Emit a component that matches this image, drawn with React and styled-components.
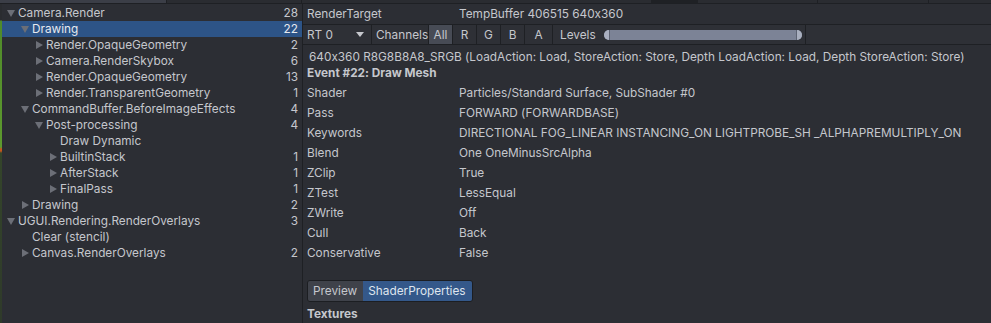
import React from 'react'
import styled, { createGlobalStyle } from 'styled-components'

const Global = createGlobalStyle`
  html, body { margin: 0; padding: 0; background: #2c2e34; }
  body {
    font-family: Inter, "Noto Sans", sans-serif;
    font-size: 11.8px;
    font-feature-settings: "calt" 0;
    color: #c5c7cd;
    overflow: hidden;
  }
`

const Window = styled.div`
  display: flex;
  flex-direction: column;
  width: 991px;
  height: 323px;
  background: #2c2e34;
  overflow: hidden;
`

const TopStrip = styled.div`
  display: flex;
  flex: none;
  height: 3px;
  border-bottom: 1px solid #1e2024;
  background: #2a2c31;
`

const TopSeg = styled.div`
  width: ${p => p.$w}px;
  flex: none;
  background: ${p => p.$tone === 'light' ? '#3b3e47' : p.$tone === 'dark' ? '#1f2125' : 'transparent'};
  border-right: ${p => p.$sep ? '1px solid #1e2024' : 'none'};
  box-sizing: border-box;
`

const Main = styled.div`
  display: flex;
  flex: 1;
  min-height: 0;
`

const SceneEdge = styled.div`
  width: 2px;
  flex: none;
  background: linear-gradient(#2a2c30 0px, #2a2c30 16px, #4f8a2a 17px, #5d9a2e 143px, #c4571c 145px, #c4571c 147px, #34452a 149px, #2f3a2a 100%);
`

const Tree = styled.div`
  width: 300px;
  flex: none;
  display: flex;
  flex-direction: column;
  padding-top: 1px;
  border-right: 1px solid #1e2024;
`

const Row = styled.div`
  display: flex;
  flex: none;
  align-items: center;
  height: 16px;
  padding-left: ${p => 5 + p.$depth * 14}px;
  padding-right: 4px;
  background: ${p => p.$selected ? '#2d5487' : 'transparent'};
  color: ${p => p.$selected ? '#e6e9ef' : '#c5c7cd'};
  white-space: nowrap;
`

const Arrow = styled.span`
  width: 11px;
  flex: none;
  display: flex;
  align-items: center;
`

const Down = styled.span`
  width: 0;
  height: 0;
  border-left: 4px solid transparent;
  border-right: 4px solid transparent;
  border-top: 7px solid #6c6f77;
`

const Right = styled.span`
  width: 0;
  height: 0;
  margin-left: 1px;
  border-top: 4px solid transparent;
  border-bottom: 4px solid transparent;
  border-left: 7px solid #6c6f77;
`

const Label = styled.span`
  flex: 1;
`

const Count = styled.span`
  text-align: right;
`

const Inspector = styled.div`
  flex: 1;
  display: flex;
  flex-direction: column;
  overflow: hidden;
  & > * { flex-shrink: 0; }
`

const KeyRow = styled.div`
  display: flex;
  align-items: center;
  height: 20px;
  padding-left: 4px;
`

const Key = styled.span`
  width: 152px;
  flex: none;
`

const Toolbar = styled.div`
  display: flex;
  height: 19px;
  border-top: 1px solid #1e2024;
  border-bottom: 1px solid #1e2024;
  background: #2e3036;
`

const ToolCell = styled.div`
  display: flex;
  align-items: center;
  width: ${p => p.$w ? p.$w + 'px' : 'auto'};
  flex: ${p => p.$w ? 'none' : '1'};
  padding-left: ${p => p.$pad ?? 0}px;
  justify-content: ${p => p.$center ? 'center' : 'flex-start'};
  background: ${p => p.$active ? '#474b55' : 'transparent'};
  border-right: ${p => p.$sep ? '1px solid #1e2024' : 'none'};
  box-sizing: border-box;
`

const Caret = styled.span`
  margin-left: auto;
  margin-right: 7px;
  width: 0;
  height: 0;
  border-left: 4px solid transparent;
  border-right: 4px solid transparent;
  border-top: 5px solid #c5c7cd;
`

const Track = styled.div`
  margin-left: auto;
  margin-right: 3px;
  width: 198px;
  height: 10px;
  border-radius: 5px;
  background: #7c8396;
  display: flex;
  justify-content: space-between;
`

const Knob = styled.div`
  width: 5px;
  height: 10px;
  background: #a9afbf;
  border-radius: ${p => p.$right ? '0 5px 5px 0' : '5px 0 0 5px'};
  border-${p => p.$right ? 'left' : 'right'}: 1px solid #5d6373;
`

const Info = styled.div`
  height: 16px;
  line-height: 16px;
  margin-top: 4px;
  padding-left: 6px;
  white-space: nowrap;
`

const Heading = styled.div`
  height: 17px;
  line-height: 17px;
  padding-left: 4px;
  font-weight: 700;
  margin-top: ${p => p.$top ?? 0}px;
  margin-bottom: ${p => p.$bottom ?? 0}px;
`

const Tabs = styled.div`
  display: flex;
  align-self: flex-start;
  margin: 17px 0 0 4px;
  border: 1px solid #1c1e22;
  border-radius: 3px;
  overflow: hidden;
`

const Tab = styled.div`
  height: 20px;
  line-height: 20px;
  padding: 0 6px 0 5px;
  background: ${p => p.$active ? '#34588a' : '#3f424a'};
  color: ${p => p.$active ? '#dfe5ee' : '#c5c7cd'};
`

const tree = [
  { d: 0, open: true, t: 'Camera.Render', c: 28 },
  { d: 1, open: true, t: 'Drawing', c: 22, sel: true },
  { d: 2, open: false, t: 'Render.OpaqueGeometry', c: 2 },
  { d: 2, open: false, t: 'Camera.RenderSkybox', c: 6 },
  { d: 2, open: false, t: 'Render.OpaqueGeometry', c: 13 },
  { d: 2, open: false, t: 'Render.TransparentGeometry', c: 1 },
  { d: 1, open: true, t: 'CommandBuffer.BeforeImageEffects', c: 4 },
  { d: 2, open: true, t: 'Post-processing', c: 4 },
  { d: 3, t: 'Draw Dynamic' },
  { d: 3, open: false, t: 'BuiltinStack', c: 1 },
  { d: 3, open: false, t: 'AfterStack', c: 1 },
  { d: 3, open: false, t: 'FinalPass', c: 1 },
  { d: 1, open: false, t: 'Drawing', c: 2 },
  { d: 0, open: true, t: 'UGUI.Rendering.RenderOverlays', c: 3 },
  { d: 1, t: 'Clear (stencil)' },
  { d: 1, open: false, t: 'Canvas.RenderOverlays', c: 2 },
]

const props = [
  ['Shader', 'Particles/Standard Surface, SubShader #0'],
  ['Pass', 'FORWARD (FORWARDBASE)'],
  ['Keywords', 'DIRECTIONAL FOG_LINEAR INSTANCING_ON LIGHTPROBE_SH _ALPHAPREMULTIPLY_ON'],
  ['Blend', 'One OneMinusSrcAlpha'],
  ['ZClip', 'True'],
  ['ZTest', 'LessEqual'],
  ['ZWrite', 'Off'],
  ['Cull', 'Back'],
  ['Conservative', 'False'],
]

export default function App() {
  return (
    <Window>
      <Global />
      <TopStrip>
        <TopSeg $w={167} $tone="light" $sep />
        <TopSeg $w={135} $sep />
        <TopSeg $w={349} />
        <TopSeg $w={47} $tone="dark" />
        <TopSeg $w={120} $sep />
        <TopSeg $w={111} $sep />
      </TopStrip>
      <Main>
        <SceneEdge />
        <Tree>
          {tree.map((r, i) => (
            <Row key={i} $depth={r.d} $selected={r.sel}>
              <Arrow>{r.open === undefined ? null : r.open ? <Down /> : <Right />}</Arrow>
              <Label>{r.t}</Label>
              {r.c !== undefined && <Count>{r.c}</Count>}
            </Row>
          ))}
        </Tree>
        <Inspector>
          <KeyRow>
            <Key>RenderTarget</Key>
            <span>TempBuffer 406515 640x360</span>
          </KeyRow>
          <Toolbar>
            <ToolCell $w={69} $pad={4} $sep>
              RT 0<Caret />
            </ToolCell>
            <ToolCell $w={57} $pad={4} $sep>Channels</ToolCell>
            <ToolCell $w={24} $center $active $sep>All</ToolCell>
            <ToolCell $w={24} $center $sep>R</ToolCell>
            <ToolCell $w={24} $center $sep>G</ToolCell>
            <ToolCell $w={24} $center $sep>B</ToolCell>
            <ToolCell $w={28} $center $sep>A</ToolCell>
            <ToolCell $w={253} $pad={7} $sep>
              Levels
              <Track>
                <Knob />
                <Knob $right />
              </Track>
            </ToolCell>
            <ToolCell />
          </Toolbar>
          <Info>640x360 R8G8B8A8_SRGB (LoadAction: Load, StoreAction: Store, Depth LoadAction: Load, Depth StoreAction: Store)</Info>
          <Heading $bottom={1}>Event #22: Draw Mesh</Heading>
          {props.map(([k, v]) => (
            <KeyRow key={k}>
              <Key>{k}</Key>
              <span>{v}</span>
            </KeyRow>
          ))}
          <Tabs>
            <Tab>Preview</Tab>
            <Tab $active>ShaderProperties</Tab>
          </Tabs>
          <Heading $top={4}>Textures</Heading>
        </Inspector>
      </Main>
    </Window>
  )
}
